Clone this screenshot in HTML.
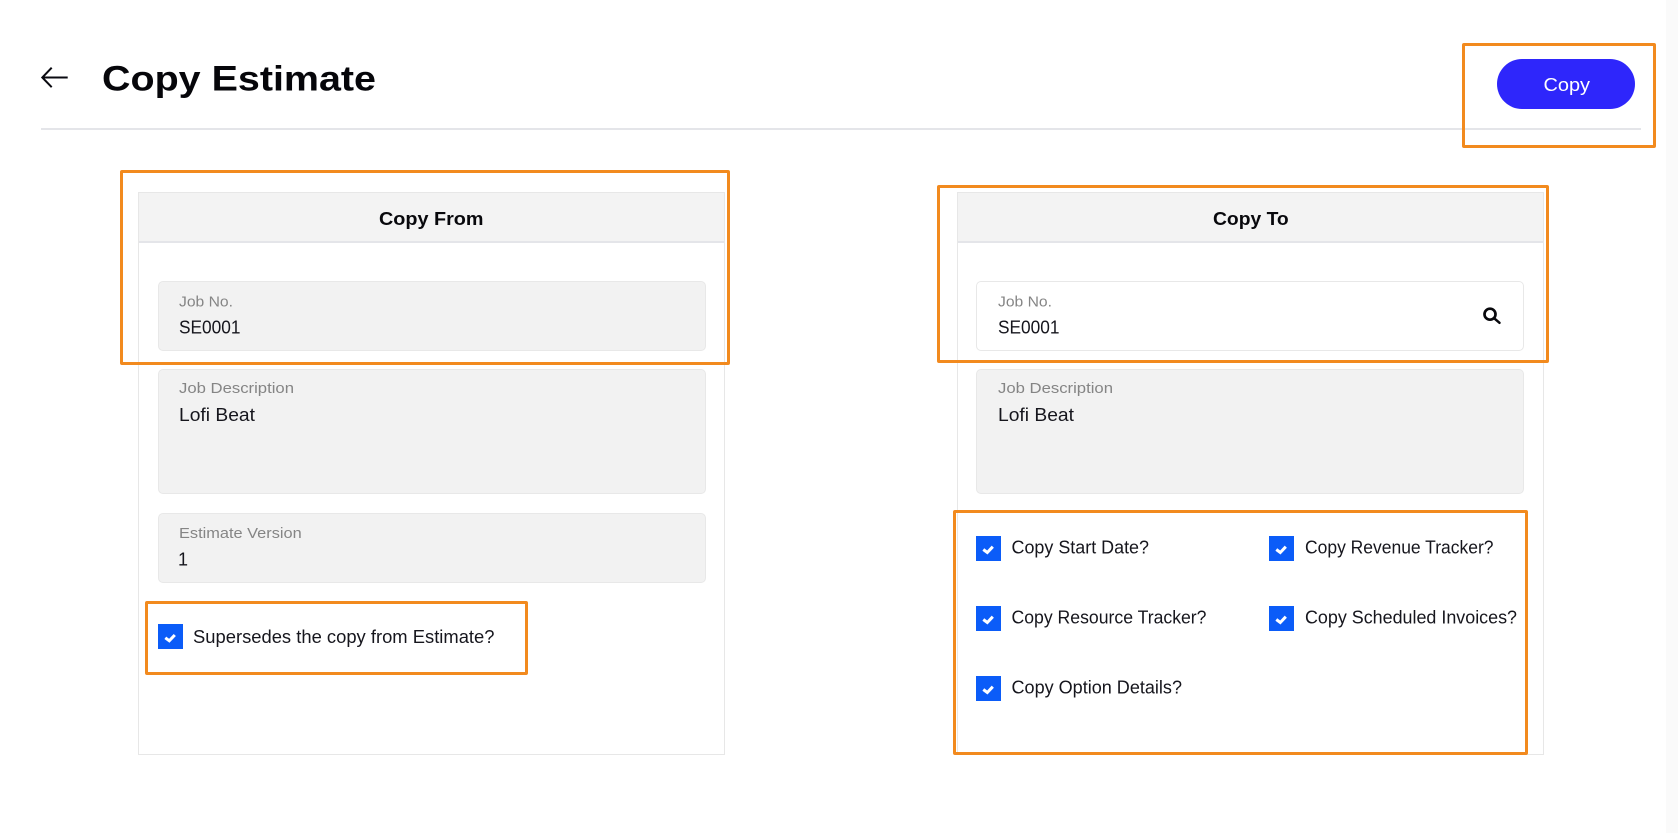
<!DOCTYPE html>
<html lang="en">
<head>
<meta charset="utf-8">
<title>Copy Estimate</title>
<style>
html,body{margin:0;padding:0;background:#fff;width:1678px;height:833px;overflow:hidden}
div{position:absolute;box-sizing:border-box}
.strip{left:1666px;top:0;width:12px;height:833px;background:#fafafa}
.hr{left:41px;top:128px;width:1600px;height:2px;background:#e4e5e9}
.btn{left:1497px;top:59px;width:138px;height:50px;border-radius:25px;background:#2e26fb}
.card{top:192px;height:563px;border:1px solid #e7e7e7;background:#fff}
.head{left:0;top:0;right:0;height:50px;background:#f3f3f3;border-bottom:2px solid #e4e5e9}
.f{border:1px solid #e8e8e8;border-radius:5px;background:#f2f2f2}
.w{background:#fff}
.cb{width:25px;height:25px;background:#0b5cf8}
.o{border:3px solid #f28a1e;border-radius:2px}
svg.t{position:absolute;left:0;top:0}
text{font-family:"Liberation Sans",sans-serif}
.l{font-size:15px;fill:#858585}
.v{font-size:18px;fill:#16161d}
.c{font-size:18px;fill:#16161d}
.h{font-size:18px;font-weight:700;fill:#08080c}
</style>
</head>
<body>
<div class="strip"></div>
<div class="hr"></div>
<div class="btn"></div>

<div class="card" style="left:138px;width:587px"><div class="head"></div></div>
<div class="f" style="left:158px;top:281px;width:548px;height:70px"></div>
<div class="f" style="left:158px;top:369px;width:548px;height:125px"></div>
<div class="f" style="left:158px;top:513px;width:548px;height:70px"></div>
<div class="cb" style="left:158px;top:624px"></div>

<div class="card" style="left:957px;width:587px"><div class="head"></div></div>
<div class="f w" style="left:976px;top:281px;width:548px;height:70px"></div>
<div class="f" style="left:976px;top:369px;width:548px;height:125px"></div>
<div class="cb" style="left:976px;top:536px"></div>
<div class="cb" style="left:1269px;top:536px"></div>
<div class="cb" style="left:976px;top:606px"></div>
<div class="cb" style="left:1269px;top:606px"></div>
<div class="cb" style="left:976px;top:676px"></div>

<svg class="t" width="1678" height="833" viewBox="0 0 1678 833" xmlns="http://www.w3.org/2000/svg">
  <path d="M42.5 77.5H67.7M51.7 67.7L42.3 77.5L51.7 87.2" fill="none" stroke="#0a0a10" stroke-width="2"/>
  <text x="102" y="90.7" font-size="35.5" font-weight="700" fill="#06060a" textLength="274" lengthAdjust="spacingAndGlyphs">Copy Estimate</text>
  <text x="1543.5" y="91" font-size="18" fill="#fff" textLength="46.5" lengthAdjust="spacingAndGlyphs">Copy</text>

  <text class="h" x="379" y="225" textLength="104.5" lengthAdjust="spacingAndGlyphs">Copy From</text>
  <text class="l" x="179" y="306.5" textLength="54" lengthAdjust="spacingAndGlyphs">Job No.</text>
  <text class="v" x="179" y="333.5" textLength="61.5" lengthAdjust="spacingAndGlyphs">SE0001</text>
  <text class="l" x="179" y="393" textLength="115" lengthAdjust="spacingAndGlyphs">Job Description</text>
  <text class="v" x="179" y="421" textLength="76" lengthAdjust="spacingAndGlyphs">Lofi Beat</text>
  <text class="l" x="179" y="538" textLength="122.7" lengthAdjust="spacingAndGlyphs">Estimate Version</text>
  <text class="v" x="178" y="565.5">1</text>
  <text class="c" x="193" y="643" textLength="301.5" lengthAdjust="spacingAndGlyphs">Supersedes the copy from Estimate?</text>

  <text class="h" x="1213" y="225" textLength="75.7" lengthAdjust="spacingAndGlyphs">Copy To</text>
  <text class="l" x="998" y="306.5" textLength="54" lengthAdjust="spacingAndGlyphs">Job No.</text>
  <text class="v" x="998" y="333.5" textLength="61.5" lengthAdjust="spacingAndGlyphs">SE0001</text>
  <circle cx="1490" cy="314.2" r="5.5" fill="none" stroke="#08080c" stroke-width="2.7"/>
  <path d="M1494.5 318.6L1499.5 322.8" fill="none" stroke="#08080c" stroke-width="2.5" stroke-linecap="round"/>
  <text class="l" x="998" y="393" textLength="115" lengthAdjust="spacingAndGlyphs">Job Description</text>
  <text class="v" x="998" y="421" textLength="76" lengthAdjust="spacingAndGlyphs">Lofi Beat</text>

  <text class="c" x="1011.5" y="553.5" textLength="137.5" lengthAdjust="spacingAndGlyphs">Copy Start Date?</text>
  <text class="c" x="1305" y="553.5" textLength="188.5" lengthAdjust="spacingAndGlyphs">Copy Revenue Tracker?</text>
  <text class="c" x="1011.5" y="623.5" textLength="195" lengthAdjust="spacingAndGlyphs">Copy Resource Tracker?</text>
  <text class="c" x="1305" y="623.5" textLength="212" lengthAdjust="spacingAndGlyphs">Copy Scheduled Invoices?</text>
  <text class="c" x="1011.5" y="693.5" textLength="170.5" lengthAdjust="spacingAndGlyphs">Copy Option Details?</text>

  <g fill="none" stroke="#fff" stroke-width="3">
    <path d="M165.3 637.8L169.3 640.8L174.8 635"/>
    <path d="M983.3 549.5L987.3 552.5L992.8 546.7"/>
    <path d="M1276.3 549.5L1280.3 552.5L1285.8 546.7"/>
    <path d="M983.3 619.5L987.3 622.5L992.8 616.7"/>
    <path d="M1276.3 619.5L1280.3 622.5L1285.8 616.7"/>
    <path d="M983.3 689.5L987.3 692.5L992.8 686.7"/>
  </g>
</svg>

<div class="o" style="left:1462px;top:43px;width:194px;height:105px"></div>
<div class="o" style="left:120px;top:170px;width:610px;height:195px"></div>
<div class="o" style="left:937px;top:185px;width:612px;height:178px"></div>
<div class="o" style="left:145px;top:601px;width:383px;height:74px"></div>
<div class="o" style="left:953px;top:510px;width:575px;height:245px"></div>
</body>
</html>
